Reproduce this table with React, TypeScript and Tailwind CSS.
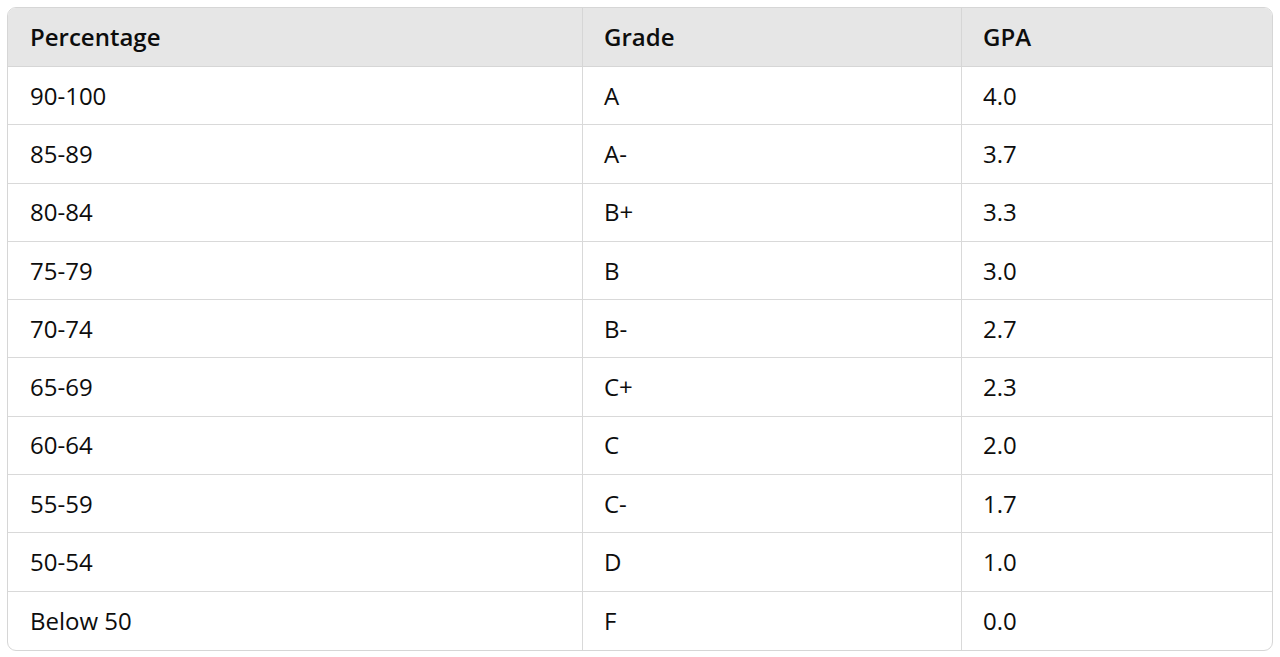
import React from "react";

const rows: [string, string, string][] = [
  ["90-100", "A", "4.0"],
  ["85-89", "A-", "3.7"],
  ["80-84", "B+", "3.3"],
  ["75-79", "B", "3.0"],
  ["70-74", "B-", "2.7"],
  ["65-69", "C+", "2.3"],
  ["60-64", "C", "2.0"],
  ["55-59", "C-", "1.7"],
  ["50-54", "D", "1.0"],
  ["Below 50", "F", "0.0"],
];

export default function App() {
  return (
    <div
      className="w-[1280px] h-[657px] bg-white p-[7px]"
      style={{ fontFamily: '"Open Sans", "Noto Sans", sans-serif' }}
    >
      <div className="w-[1266px] border border-[#d6d6d6] rounded-[9px] overflow-hidden">
        <div className="grid grid-cols-[575px_379px_1fr] bg-[#e6e6e6] border-b border-[#d6d6d6] h-[59px] text-[24px] font-semibold text-[#0d0d0d]">
          <div className="flex items-center pl-[22px] border-r border-[#d6d6d6]">Percentage</div>
          <div className="flex items-center pl-[21px] border-r border-[#d6d6d6]">Grade</div>
          <div className="flex items-center pl-[21px]">GPA</div>
        </div>
        {rows.map((r, i) => (
          <div
            key={i}
            className={
              "grid grid-cols-[575px_379px_1fr] h-[58.3px] text-[24px] text-[#0d0d0d] " +
              (i < rows.length - 1 ? "border-b border-[#d9d9d9]" : "")
            }
          >
            <div className="flex items-center pl-[22px] border-r border-[#d9d9d9]">{r[0]}</div>
            <div className="flex items-center pl-[21px] border-r border-[#d9d9d9]">{r[1]}</div>
            <div className="flex items-center pl-[21px]">{r[2]}</div>
          </div>
        ))}
      </div>
    </div>
  );
}
